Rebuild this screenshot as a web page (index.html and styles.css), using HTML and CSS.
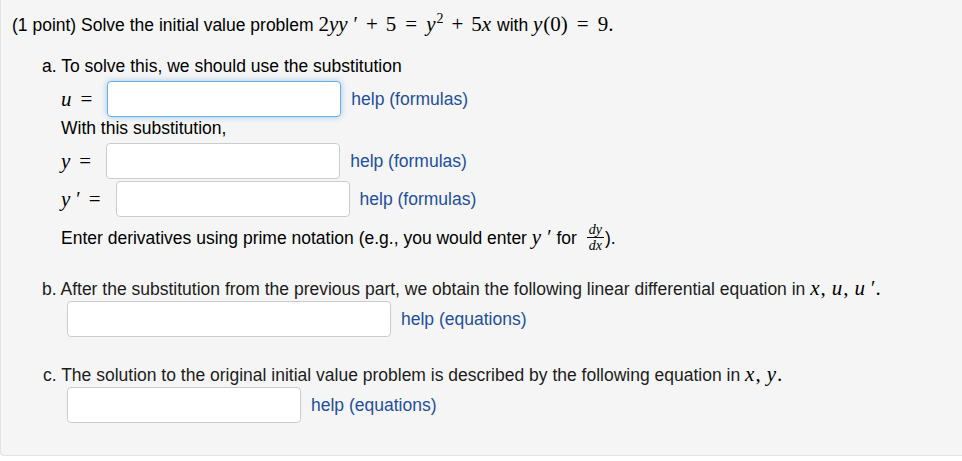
FILE: index.html
```html
<!DOCTYPE html>
<html>
<head>
<meta charset="utf-8">
<link rel="stylesheet" href="styles.css">
</head>
<body>
<div class="problem">
  <div class="title">(1 point) Solve the initial value problem <span class="m">2<i>yy</i><span class="pr">′</span><span class="op">+</span>5<span class="rel">=</span><i>y</i><sup>2</sup><span class="op">+</span>5<i>x</i></span> with <span class="m"><i>y</i>(0)<span class="rel">=</span>9.</span></div>

  <div class="part part-a">
    <div class="line">a. To solve this, we should use the substitution</div>
    <div class="sub">
      <div class="row row-u"><span class="m lbl"><i>u</i><span class="rel">=</span></span><span class="inp focus"></span><a class="help">help (formulas)</a></div>
      <div class="line with">With this substitution,</div>
      <div class="row row-y"><span class="m lbl"><i>y</i><span class="rel">=</span></span><span class="inp"></span><a class="help">help (formulas)</a></div>
      <div class="row row-yp"><span class="m lbl"><i>y</i><span class="pr">′</span><span class="rel">=</span></span><span class="inp"></span><a class="help">help (formulas)</a></div>
      <div class="line enter">Enter derivatives using prime notation (e.g., you would enter <span class="m"><i>y</i><span class="pr">′</span></span> for <span class="frac"><span class="num"><i>dy</i></span><span class="den"><i>dx</i></span></span>).</div>
    </div>
  </div>

  <div class="part part-b">
    <div class="line">b. After the substitution from the previous part, we obtain the following linear differential equation in <span class="m"><i>x</i><span class="cm">,</span><i>u</i><span class="cm">,</span><i>u</i><span class="pr">′</span>.</span></div>
    <div class="row row-b"><span class="inp wide"></span><a class="help">help (equations)</a></div>
  </div>

  <div class="part part-c">
    <div class="line">c. The solution to the original initial value problem is described by the following equation in <span class="m"><i>x</i><span class="cm">,</span><i>y</i>.</span></div>
    <div class="row row-c"><span class="inp"></span><a class="help">help (equations)</a></div>
  </div>
</div>
</body>
</html>
```

FILE: styles.css
```css
html, body {
  margin: 0;
  padding: 0;
  background: #ffffff;
}
body {
  font-family: "Liberation Sans", Arial, sans-serif;
  font-size: 17.5px;
  color: #1c1c1c;
}
.problem {
  background: #f5f5f5;
  border: 1px solid #e3e3e3;
  border-top: 0;
  border-right: 0;
  border-radius: 0 0 0 4px;
  padding: 14px 0 29px 11px;
  width: 100%;
  height: 456px;
  box-sizing: border-box;
  overflow: hidden;
}
.title {
  line-height: 20px;
  height: 20px;
  color: #000;
  white-space: nowrap;
}
.line {
  line-height: 20px;
  height: 20px;
  white-space: nowrap;
}
.part {
  padding-left: 30px;
}
.part-a { margin-top: 22px; color: #000; }
.sub { padding-left: 19px; }
.row {
  display: flex;
  align-items: center;
  height: 36px;
}
.row-u { margin-top: 5px; }
.with { margin-top: 1px; }
.row-y { margin-top: 5px; }
.row-yp { margin-top: 2px; }
.enter { margin-top: 8px; }
.part-b { margin-top: 33px; }
.row-b { margin-top: 3px; padding-left: 25px; }
.part-c { margin-top: 27px; padding-left: 31px; }
.row-c { margin-top: 3px; padding-left: 24px; }

.m {
  font-family: "Liberation Serif", "Times New Roman", serif;
  font-size: 21px;
  white-space: nowrap;
  color: #000;
}
.m i { font-style: italic; margin-right: 1px; }
.m sup {
  font-size: 14px;
  line-height: 0;
  vertical-align: 8px;
  font-style: normal;
}
.title .op { margin: 0 8px; }
.title .rel { margin: 0 9px; }
.rel { margin: 0 8px; }
.cm { margin-right: 6px; }
.pr { margin-left: 5px; font-size: 20px; }
.lbl { margin-right: 15px; }
.lbl .rel { margin-right: 0; }

.inp {
  display: inline-block;
  width: 234px;
  height: 36px;
  box-sizing: border-box;
  background: #fff;
  border: 1px solid #ccc;
  border-radius: 4px;
  flex: none;
}
.inp.wide { width: 324px; }
.inp.focus {
  border-color: #66afe9;
  box-shadow: 0 0 6px rgba(102, 175, 233, 0.6);
}
.help {
  color: #1e4f9c;
  margin-left: 10px;
  text-decoration: none;
}
.frac {
  display: inline-flex;
  flex-direction: column;
  align-items: center;
  vertical-align: middle;
  font-family: "Liberation Serif", "Times New Roman", serif;
  font-size: 14px;
  line-height: 13px;
  margin: 0 1px 0 5px;
  position: relative;
  top: -2px;
}
.frac .num {
  border-bottom: 1px solid #000;
  padding: 0 2px 1px;
}
.frac .den { padding: 1px 2px 0; }
```
